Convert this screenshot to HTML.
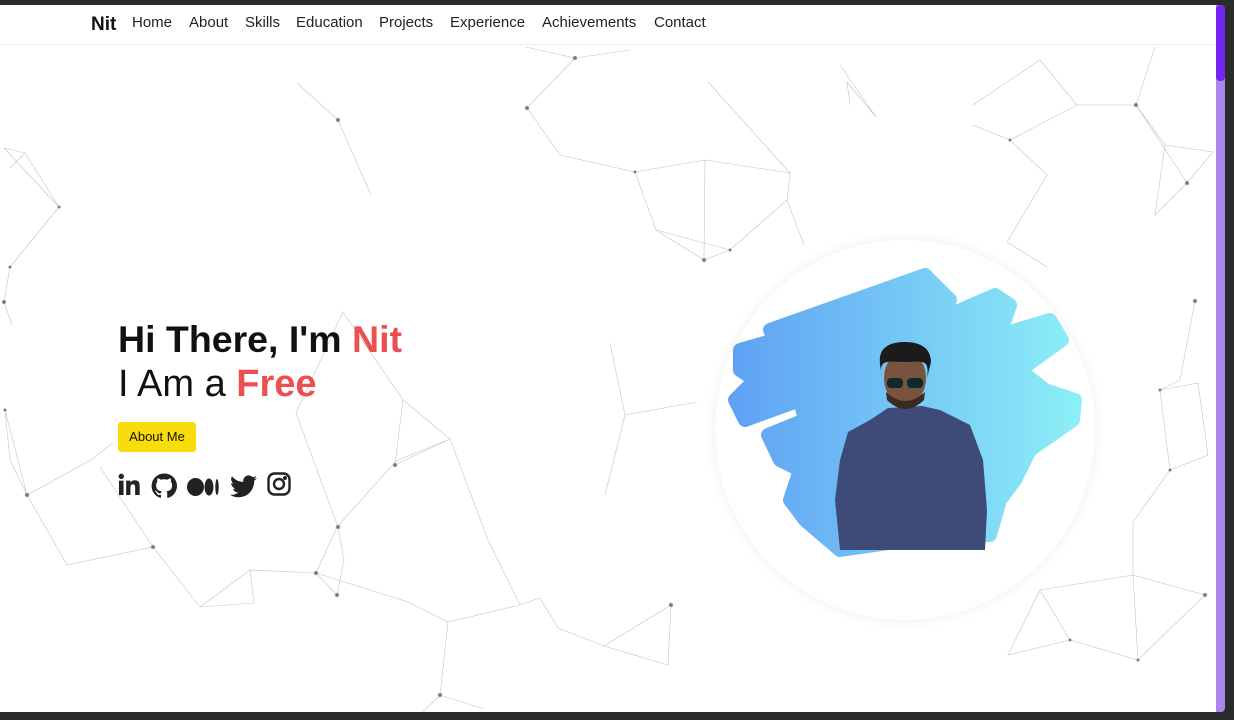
<!DOCTYPE html>
<html><head><meta charset="utf-8">
<style>
*{margin:0;padding:0;box-sizing:border-box}
html,body{width:1234px;height:720px;overflow:hidden;background:#2b2b2b;font-family:"Liberation Sans",Arial,sans-serif}
#page{position:absolute;left:0;top:5px;width:1216px;height:707px;background:#fff;overflow:hidden}
#sb{position:absolute;left:1216px;top:5px;width:9px;height:707px;background:#a987ea;border-radius:0 4px 4px 0}
#thumb{position:absolute;left:1216px;top:5px;width:9px;height:76px;background:#7424f5;border-radius:4px}
nav{position:absolute;left:0;top:0;width:1216px;height:40px;background:#fff;border-bottom:1px solid #eee;z-index:3}
nav .logo{position:absolute;left:91px;top:9px;font-size:19px;font-weight:bold;color:#111}
nav a{position:absolute;top:9px;font-size:15px;color:#222;text-decoration:none}
#bg{position:absolute;left:0;top:0}
h1{position:absolute;left:118px;top:313px;font-size:37.5px;font-weight:bold;color:#111;white-space:nowrap}
h2{position:absolute;left:118px;top:358px;font-size:38px;font-weight:normal;color:#111;white-space:nowrap}
.r{color:#ec4f4f;font-weight:bold}
.btn{position:absolute;left:118px;top:417px;width:78px;height:30px;background:#f9dc0c;border-radius:3px;font-size:13px;color:#111;text-align:center;line-height:30px}
.soc{position:absolute;top:466px}
</style></head><body>
<div id="page">
<svg id="bg" width="1216" height="707" stroke="#c4c4c4" stroke-width="0.6" fill="#777">
<g fill="none">
<path d="M297 78L338 115L371 190"/>
<path d="M4 143L25 148L59 202L4 143M10 163L25 148M59 202L10 262L4 297L12 320"/>
<path d="M526 42L575 53L630 45M575 53L527 103L560 150L635 167L705 155L790 168L708 77M635 167L656 225L704 255L730 245L787 195L790 168M656 225L730 245M705 155L704 255M787 195L804 240"/>
<path d="M840 60L876 112L847 77L850 100"/>
<path d="M973 120L1010 135L1077 100L1136 100L1155 42L1136 100L1165 140L1213 147L1187 178L1155 210L1165 140M1077 100L1040 55L973 100M1010 135L1047 170L1007 237L1047 262M1136 100L1187 178"/>
<path d="M5 405L10 455L27 490L67 560L153 542L200 602L254 598L250 565L316 568L337 590L344 555L338 522L296 408L343 307L403 395L395 460L450 434L396 456L337 522M91 455L27 490M5 405L27 490L91 455L113 438M337 522L316 568L408 597L448 617L520 600L540 593L558 623L604 641L668 660L671 600L604 641M250 565L200 602M153 542L100 462M403 395L450 434L488 535L520 600M448 617L440 690M440 690L420 710M440 690L484 704"/>
<path d="M610 338L625 410L697 397M625 410L605 490"/>
<path d="M1195 296L1180 375L1160 385L1170 465L1133 517L1133 570L1205 590L1138 655L1070 635L1040 585L1008 650L1070 635M1133 570L1138 655M1160 385L1198 378L1208 450L1170 465M1133 570L1040 585"/>
</g>
<g>
<circle cx="338" cy="115" r="2"/><circle cx="59" cy="202" r="1.5"/><circle cx="10" cy="262" r="1.5"/><circle cx="4" cy="297" r="2"/>
<circle cx="575" cy="53" r="2"/><circle cx="527" cy="103" r="2"/><circle cx="635" cy="167" r="1.5"/><circle cx="704" cy="255" r="2"/><circle cx="730" cy="245" r="1.5"/>
<circle cx="1136" cy="100" r="2"/><circle cx="1187" cy="178" r="2"/><circle cx="1010" cy="135" r="1.5"/><circle cx="1195" cy="296" r="2"/><circle cx="1160" cy="385" r="1.5"/><circle cx="1170" cy="465" r="1.5"/><circle cx="1205" cy="590" r="2"/><circle cx="1138" cy="655" r="1.5"/><circle cx="1070" cy="635" r="1.5"/>
<circle cx="153" cy="542" r="2"/><circle cx="337" cy="590" r="2"/><circle cx="338" cy="522" r="2"/><circle cx="316" cy="568" r="2"/><circle cx="395" cy="460" r="2"/><circle cx="27" cy="490" r="2"/><circle cx="5" cy="405" r="1.5"/><circle cx="671" cy="600" r="2"/><circle cx="440" cy="690" r="2"/>
</g>
</svg>
<nav>
<span class="logo">Nit</span>
<a style="left:132px">Home</a><a style="left:189px">About</a><a style="left:245px">Skills</a><a style="left:296px">Education</a><a style="left:379px">Projects</a><a style="left:450px">Experience</a><a style="left:542px">Achievements</a><a style="left:654px">Contact</a>
</nav>
<h1>Hi There, I'm <span class="r">Nit</span></h1>
<h2>I Am a <span class="r">Free</span></h2>
<div class="btn">About Me</div>
<svg class="soc" style="left:118px;top:468px" width="23" height="23" viewBox="0 0 24 24" fill="#222"><rect x="1" y="8" width="4.8" height="15"/><circle cx="3.4" cy="3.5" r="2.8"/><path d="M8.5 8h4.5v2c.7-1.3 2.3-2.4 4.6-2.4 4.3 0 5 2.8 5 6.5V23h-4.7v-7.5c0-1.7 0-3.8-2.3-3.8s-2.6 1.8-2.6 3.7V23H8.5z"/></svg>
<svg class="soc" style="left:151px;top:468px" width="26" height="26" viewBox="0 0 24 24" fill="#222"><path d="M12 .5a11.5 11.5 0 0 0-3.6 22.4c.6.1.8-.2.8-.6v-2.1c-3.2.7-3.9-1.5-3.9-1.5-.5-1.3-1.3-1.7-1.3-1.7-1-.7.1-.7.1-.7 1.2.1 1.8 1.2 1.8 1.2 1 1.8 2.7 1.3 3.4 1 .1-.8.4-1.3.7-1.6-2.6-.3-5.3-1.3-5.3-5.7 0-1.3.5-2.3 1.2-3.1-.1-.3-.5-1.5.1-3.1 0 0 1-.3 3.2 1.2a11 11 0 0 1 5.8 0c2.2-1.5 3.2-1.2 3.2-1.2.6 1.6.2 2.8.1 3.1.8.8 1.2 1.8 1.2 3.1 0 4.4-2.7 5.4-5.3 5.7.4.4.8 1.1.8 2.2v3.3c0 .3.2.7.8.6A11.5 11.5 0 0 0 12 .5z"/></svg>
<svg class="soc" style="left:187px;top:472px" width="33" height="20" viewBox="0 0 33 19" fill="#222"><ellipse cx="8.5" cy="9.5" rx="8.5" ry="9"/><ellipse cx="22" cy="9.5" rx="4.5" ry="8.5"/><ellipse cx="30" cy="9.5" rx="1.7" ry="8"/></svg>
<svg class="soc" style="left:230px;top:470px" width="27" height="23" viewBox="0 0 24 20" fill="#222"><path d="M24 2.4a9.8 9.8 0 0 1-2.8.8A4.9 4.9 0 0 0 23.3.5a9.9 9.9 0 0 1-3.1 1.2A4.9 4.9 0 0 0 11.8 6 14 14 0 0 1 1.7.9a4.9 4.9 0 0 0 1.5 6.6A4.9 4.9 0 0 1 1 6.9a4.9 4.9 0 0 0 3.9 4.9 4.9 4.9 0 0 1-2.2.1 4.9 4.9 0 0 0 4.6 3.4A9.9 9.9 0 0 1 0 17.3 14 14 0 0 0 7.5 19.5c9 0 14-7.5 14-14v-.6A10 10 0 0 0 24 2.4z"/></svg>
<svg class="soc" style="left:267px;top:467px" width="24" height="24" viewBox="0 0 24 24" fill="none" stroke="#222" stroke-width="2.4"><rect x="1.5" y="1.5" width="21" height="21" rx="6"/><circle cx="12" cy="12" r="5"/><circle cx="18" cy="6" r="0.8" fill="#222"/></svg>
<div style="position:absolute;left:715px;top:235px;width:380px;height:380px;border-radius:50%;background:#fff;box-shadow:0 0 12px rgba(0,0,0,0.07)"></div>
<svg style="position:absolute;left:700px;top:255px" width="400" height="320" viewBox="0 0 400 320">
<defs><linearGradient id="g" x1="0" x2="1"><stop offset="0" stop-color="#5fa2f4"/><stop offset="1" stop-color="#8ceef6"/></linearGradient></defs>
<path fill="url(#g)" stroke="url(#g)" stroke-width="14" stroke-linejoin="round" d="M70 70L225 15L240 30L250 40L238 60L295 35L310 45L300 75L350 60L362 80L320 110L345 130L375 140L373 160L330 190L315 220L300 240L290 275L210 280L140 290L105 260L90 240L100 210L80 200L68 175L105 160L100 140L45 160L35 140L55 120L40 110L40 90L75 80Z"/>
<path fill="#3e4a77" d="M188 148L170 160L148 172L140 200L135 240L140 290L285 290L287 250L283 200L270 165L240 150L222 146Z"/>
<ellipse cx="205" cy="118" rx="21" ry="27" fill="#7a5240"/>
<path fill="#1b1b1b" d="M182 118C178 98 187 102 205 102C222 102 230 98 227 118L231 102C231 88 220 82 205 82C189 82 178 88 180 104Z"/>
<rect x="187" y="118" width="16" height="10" rx="4" fill="#0e2a2a"/><rect x="207" y="118" width="16" height="10" rx="4" fill="#0e2a2a"/>
<path fill="#3b2a22" d="M186 132Q205 150 225 132L224 140Q205 158 187 140Z"/>
</svg>
</div>
<div id="sb"></div><div id="thumb"></div>
</body></html>
